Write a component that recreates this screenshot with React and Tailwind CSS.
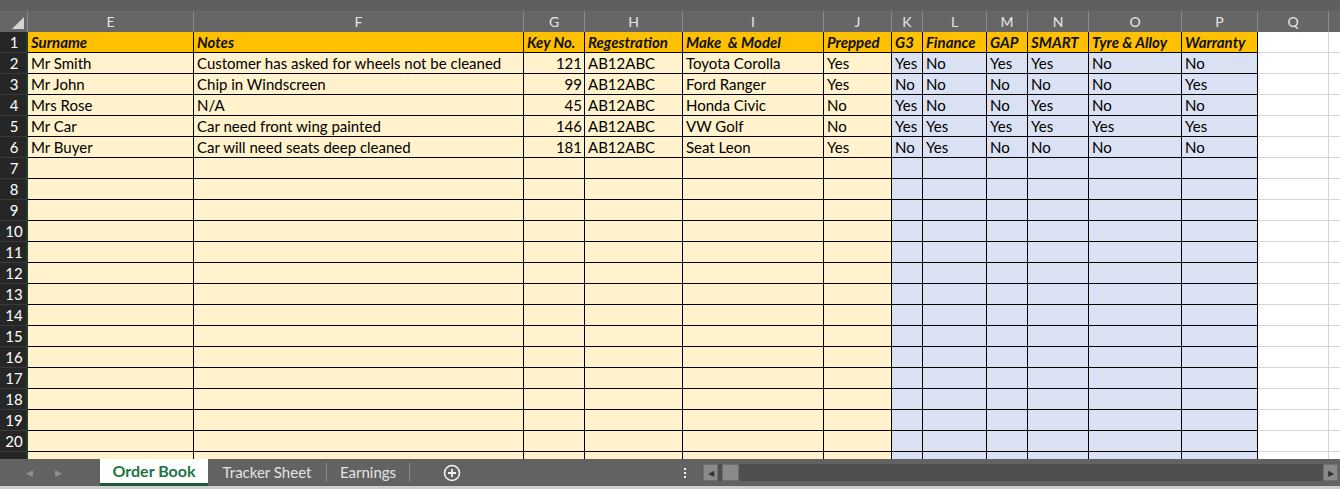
import React from 'react';

const COLS = [
  { key: 'E', w: 166 },
  { key: 'F', w: 330 },
  { key: 'G', w: 61 },
  { key: 'H', w: 98 },
  { key: 'I', w: 141 },
  { key: 'J', w: 68 },
  { key: 'K', w: 31 },
  { key: 'L', w: 64 },
  { key: 'M', w: 41 },
  { key: 'N', w: 61 },
  { key: 'O', w: 93 },
  { key: 'P', w: 76 },
  { key: 'Q', w: 71 },
  { key: '', w: 40 },
];

const HEADERS = ['Surname', 'Notes', 'Key No.', 'Regestration', 'Make  & Model', 'Prepped', 'G3', 'Finance', 'GAP', 'SMART', 'Tyre & Alloy', 'Warranty'];

const ROWS = [
  ['Mr Smith', 'Customer has asked for wheels not be cleaned', '121', 'AB12ABC', 'Toyota Corolla', 'Yes', 'Yes', 'No', 'Yes', 'Yes', 'No', 'No'],
  ['Mr John', 'Chip in Windscreen', '99', 'AB12ABC', 'Ford Ranger', 'Yes', 'No', 'No', 'No', 'No', 'No', 'Yes'],
  ['Mrs Rose', 'N/A', '45', 'AB12ABC', 'Honda Civic', 'No', 'Yes', 'No', 'No', 'Yes', 'No', 'No'],
  ['Mr Car', 'Car need front wing painted', '146', 'AB12ABC', 'VW Golf', 'No', 'Yes', 'Yes', 'Yes', 'Yes', 'Yes', 'Yes'],
  ['Mr Buyer', 'Car will need seats deep cleaned', '181', 'AB12ABC', 'Seat Leon', 'Yes', 'No', 'Yes', 'No', 'No', 'No', 'No'],
];

const font = { fontFamily: 'Lato, "Open Sans", sans-serif' };

function Cell({ ci, row, children }) {
  const w = COLS[ci].w;
  const inTable = ci < 12;
  let bg = 'bg-white';
  if (inTable) {
    if (row === 1) bg = 'bg-[#ffc000]';
    else bg = ci < 6 ? 'bg-[#fff2cc]' : 'bg-[#d9e1f2]';
  }
  const border = inTable
    ? 'border-r border-b border-black'
    : 'border-r border-b border-[#d4d4d4]';
  const align = ci === 2 && row !== 1 ? 'justify-end pr-[2px]' : 'pl-[3px]';
  const weight = row === 1 ? 'font-bold italic text-[#111]' : 'text-black';
  return (
    <div
      className={`h-[21px] shrink-0 flex items-center overflow-hidden whitespace-pre text-[15px] leading-none ${bg} ${border} ${align} ${weight}`}
      style={{ width: w }}
    >
      {children}
    </div>
  );
}

export default function App() {
  const rowNums = Array.from({ length: 20 }, (_, i) => i + 1);

  return (
    <div className="w-[1340px] h-[489px] bg-[#636363] overflow-hidden flex flex-col" style={font}>
      {/* top strip */}
      <div className="h-[11px] bg-[#5f5f5f]" />

      {/* column letters */}
      <div className="flex h-[21px] bg-[#666666]">
        <div className="w-[28px] shrink-0 relative border-r border-[#8a8a8a]">
          <div className="absolute right-[3px] bottom-[3px] w-0 h-0 border-l-[12px] border-l-transparent border-b-[12px] border-b-[#d6d6d6]" />
        </div>
        {COLS.map((c, i) => (
          <div
            key={i}
            className="shrink-0 flex items-center justify-center text-[14px] text-[#e6e6e6] border-r border-[#8a8a8a]"
            style={{ width: c.w }}
          >
            {c.key}
          </div>
        ))}
      </div>

      {/* grid */}
      <div className="h-[427px] overflow-hidden">
        {rowNums.map((r) => {
          const data = r === 1 ? HEADERS : ROWS[r - 2] || [];
          return (
            <div key={r} className="flex">
              <div className="w-[28px] h-[21px] shrink-0 flex items-center justify-center text-[15px] text-white bg-[#262626] border-b border-[#3a3a3a] border-r-2 border-r-[#1f3d2a] pl-[2px]">
                {r}
              </div>
              {COLS.map((c, ci) => (
                <Cell key={ci} ci={ci} row={r}>
                  {data[ci] || ''}
                </Cell>
              ))}
            </div>
          );
        })}
        {/* partially visible row 21 */}
        <div className="flex h-[7px] overflow-hidden">
          <div className="w-[28px] shrink-0 bg-[#262626] border-r-2 border-r-[#1f3d2a]" />
          {COLS.map((c, ci) => (
            <div
              key={ci}
              className={`shrink-0 border-r ${ci < 12 ? (ci < 6 ? 'bg-[#fff2cc] border-black' : 'bg-[#d9e1f2] border-black') : 'bg-white border-[#d4d4d4]'}`}
              style={{ width: c.w }}
            />
          ))}
        </div>
      </div>

      {/* sheet tabs */}
      <div className="h-[27px] flex items-stretch bg-[#626262] text-[15px]">
        <div className="w-[100px] shrink-0 flex items-center pl-[26px] gap-[22px] text-[#8f8f8f] text-[9px]">
          <span>◀</span>
          <span>▶</span>
        </div>
        <div className="w-[108px] shrink-0 bg-white border-b-[3px] border-[#1e5a3a] flex items-center justify-center font-bold text-[#217346] text-[16px]">
          Order Book
        </div>
        <div className="w-[119px] shrink-0 flex items-center justify-center text-[#e3e3e3] border-r border-[#8c8c8c] my-[4px]">
          Tracker Sheet
        </div>
        <div className="w-[83px] shrink-0 flex items-center justify-center text-[#e3e3e3] border-r border-[#8c8c8c] my-[4px]">
          Earnings
        </div>
        <div className="w-[84px] shrink-0 flex items-center justify-center">
          <svg width="18" height="18" viewBox="0 0 18 18">
            <circle cx="9" cy="9" r="7.5" fill="none" stroke="#f2f2f2" strokeWidth="1.6" />
            <path d="M9 5v8M5 9h8" stroke="#f2f2f2" strokeWidth="1.8" />
          </svg>
        </div>
        <div className="w-[209px] shrink-0 flex items-center justify-end pr-[17px]">
          <div className="flex flex-col gap-[2px]">
            <div className="w-[2px] h-[2px] bg-[#eeeeee]" />
            <div className="w-[2px] h-[2px] bg-[#eeeeee]" />
            <div className="w-[2px] h-[2px] bg-[#eeeeee]" />
          </div>
        </div>
        <div className="flex-1 flex items-center pr-[2px]">
          <div className="flex-1 h-[17px] bg-[#4f4f4f] flex items-center">
            <div className="w-[15px] h-[17px] bg-[#8a8a8a] border border-[#6e6e6e] flex items-center justify-center text-[8px] text-[#333]">◀</div>
            <div className="w-[17px] h-[17px] ml-[4px] bg-[#8a8a8a] border border-[#6e6e6e]" />
            <div className="flex-1" />
            <div className="w-[15px] h-[17px] bg-[#8a8a8a] border border-[#6e6e6e] flex items-center justify-center text-[8px] text-[#333]">▶</div>
          </div>
        </div>
      </div>
      <div className="flex-1 bg-[#cfcfcf]" />
    </div>
  );
}
